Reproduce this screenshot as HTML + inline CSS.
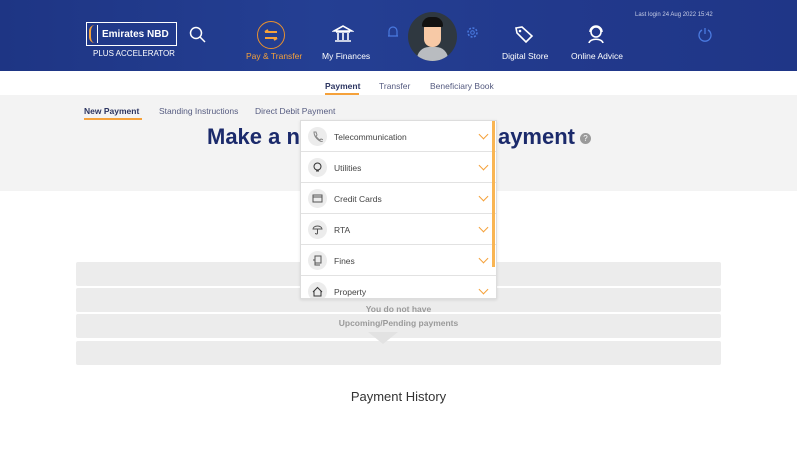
<!DOCTYPE html>
<html><head><meta charset="utf-8"><style>
*{margin:0;padding:0;box-sizing:border-box}
body{width:797px;height:459px;overflow:hidden;background:#fff;font-family:"Liberation Sans",sans-serif;position:relative}
.hdr{position:absolute;left:0;top:0;width:797px;height:71px;background:linear-gradient(90deg,#1e3584,#243f93 40%,#22398c 70%,#1f3687)}
.abs{position:absolute}
.w{color:#fff;font-size:8.5px}
.sub{position:absolute;top:71px;left:0;width:797px;height:24px;background:#fff}
.grey{position:absolute;top:95px;left:0;width:797px;height:96px;background:#f3f3f3}
.row{position:absolute;left:76px;width:645px;height:24px;background:#ececec;border-radius:2px}
.dd{position:absolute;left:300px;top:120px;width:197px;height:179px;background:#fff;border:1px solid #ddd;overflow:hidden;box-shadow:0 1px 3px rgba(0,0,0,.1)}
.it{height:31px;border-bottom:1px solid #e2e2e2;position:relative;font-size:8.5px;color:#444}
.it .ic{position:absolute;left:7px;top:6px;width:19px;height:19px;border-radius:50%;background:#ececec}
.it .ic svg{position:absolute;left:4px;top:4px}
.it span{position:absolute;left:33px;top:11px}
.it .ch{position:absolute;right:9px;top:10px;width:7px;height:7px;border-right:1.3px solid #f5a13a;border-bottom:1.3px solid #f5a13a;transform:rotate(45deg)}
</style></head><body>
<div class="hdr"></div>
<div class="abs" style="left:86px;top:22px;width:91px;height:24px;border:1.5px solid #fff"></div>
<div class="abs" style="left:89px;top:25px;width:10px;height:18px;border-left:2px solid #f5a13a;border-radius:6px 0 0 6px"></div>
<div class="abs" style="left:97px;top:25px;width:1px;height:18px;background:#fff"></div>
<div class="abs" style="left:102px;top:29px;color:#fff;font-size:10px;font-weight:bold">Emirates NBD</div>
<div class="abs w" style="left:93px;top:49px;font-size:8px">PLUS ACCELERATOR</div>
<svg class="abs" style="left:189px;top:26px" width="17" height="17"><circle cx="7" cy="7" r="5.5" stroke="#fff" stroke-width="1.5" fill="none"/><line x1="11" y1="11" x2="16" y2="16" stroke="#fff" stroke-width="1.5"/></svg>
<div class="abs" style="left:257px;top:21px;width:28px;height:28px;border:1px solid #e8902e;border-radius:50%"></div>
<svg class="abs" style="left:262px;top:28px" width="18" height="14"><path d="M3 4h12M3 4l3-2M15 10H3M15 10l-3 2" stroke="#f5a13a" stroke-width="2" fill="none"/></svg>
<div class="abs" style="left:246px;top:51px;color:#f5a13a;font-size:8.5px">Pay &amp; Transfer</div>
<div class="abs" style="left:267px;top:66px;width:0;height:0;border:5px solid transparent;border-bottom-color:#fff"></div>
<svg class="abs" style="left:332px;top:24px" width="22" height="20"><path d="M2 7L11 2L20 7ZM4 8h14M6 9v7M11 9v7M16 9v7M3 17h16" stroke="#fff" stroke-width="1.6" fill="none"/></svg>
<div class="abs w" style="left:322px;top:51px">My Finances</div>
<svg class="abs" style="left:387px;top:25px" width="12" height="14"><path d="M2 11V6a4 4 0 0 1 8 0v5zM1 11h10" stroke="#4a7ae0" stroke-width="1.2" fill="none"/></svg>
<div class="abs" style="left:408px;top:12px;width:49px;height:49px;border-radius:50%;background:#2f3840;overflow:hidden">
<div class="abs" style="left:9px;top:35px;width:31px;height:20px;border-radius:12px 12px 0 0;background:#b9bcc0"></div>
<div class="abs" style="left:16px;top:8px;width:17px;height:27px;border-radius:8px;background:#f7c9a6"></div>
<div class="abs" style="left:14px;top:5px;width:21px;height:10px;border-radius:10px 10px 2px 2px;background:#111"></div></div>
<svg class="abs" style="left:466px;top:26px" width="13" height="13"><circle cx="6.5" cy="6.5" r="4.5" stroke="#4a7ae0" stroke-width="1.5" stroke-dasharray="2 1.5" fill="none"/><circle cx="6.5" cy="6.5" r="1.8" stroke="#4a7ae0" fill="none"/></svg>
<svg class="abs" style="left:514px;top:25px" width="20" height="18"><path d="M2 3l6-1 10 9-6 6-9-9z" stroke="#fff" stroke-width="1.6" fill="none"/><circle cx="6" cy="6" r="1.3" fill="#fff"/></svg>
<div class="abs w" style="left:502px;top:51px">Digital Store</div>
<svg class="abs" style="left:587px;top:24px" width="18" height="20"><circle cx="9" cy="8" r="5" stroke="#fff" stroke-width="1.6" fill="none"/><path d="M3 8a6 6 0 0 1 12 0M2 19c1-5 13-5 14 0" stroke="#fff" stroke-width="1.6" fill="none"/></svg>
<div class="abs w" style="left:571px;top:51px">Online Advice</div>
<div class="abs" style="left:635px;top:12px;color:#c6cde6;font-size:6px">Last login 24 Aug 2022 15:42</div>
<svg class="abs" style="left:697px;top:26px" width="16" height="17"><path d="M5 4a6 6 0 1 0 6 0M8 2v6" stroke="#4a7ae0" stroke-width="1.3" fill="none"/></svg>
<div class="sub"></div>
<div class="abs" style="left:325px;top:81px;font-size:8.5px;font-weight:bold;color:#2c3561">Payment</div>
<div class="abs" style="left:325px;top:93px;width:34px;height:2px;background:#f5a13a"></div>
<div class="abs" style="left:379px;top:81px;font-size:8.5px;color:#555b80">Transfer</div>
<div class="abs" style="left:430px;top:81px;font-size:8.5px;color:#555b80">Beneficiary Book</div>
<div class="grey"></div>
<div class="abs" style="left:84px;top:106px;font-size:8.5px;font-weight:bold;color:#2c3561">New Payment</div>
<div class="abs" style="left:84px;top:118px;width:58px;height:2px;background:#f5a13a"></div>
<div class="abs" style="left:159px;top:106px;font-size:8.5px;color:#555b80">Standing Instructions</div>
<div class="abs" style="left:255px;top:106px;font-size:8.5px;color:#555b80">Direct Debit Payment</div>
<div class="abs" style="left:207px;top:124px;font-size:22px;font-weight:bold;color:#1b2a6b">Make a new</div>
<div class="abs" style="right:222px;top:124px;font-size:22px;font-weight:bold;color:#1b2a6b">ayment</div>
<div class="abs" style="left:580px;top:133px;width:11px;height:11px;border-radius:50%;background:#9a9a9a;color:#fff;font-size:8px;text-align:center;line-height:11px">?</div>
<div class="row" style="top:262px"></div>
<div class="row" style="top:288px"></div>
<div class="row" style="top:314px"></div>
<div class="row" style="top:341px"></div>
<div class="abs" style="left:368px;top:332px;width:0;height:0;border:15px solid transparent;border-top:12px solid #e2e2e2"></div>
<div class="abs" style="left:300px;top:302px;width:197px;text-align:center;font-size:8.5px;font-weight:bold;color:#9a9a9a;line-height:14px">You do not have<br>Upcoming/Pending payments</div>
<div class="abs" style="left:0;top:389px;width:797px;text-align:center;font-size:13px;color:#333">Payment History</div>
<div class="dd">
<div class="it"><div class="ic"><svg width="11" height="11"><path d="M2 1l2 0 1 3-1 1c1 2 2 3 4 4l1-1 3 1 0 2c-5 0-10-5-10-10z" stroke="#888" fill="none"/></svg></div><span>Telecommunication</span><div class="ch"></div></div>
<div class="it"><div class="ic"><svg width="11" height="11"><circle cx="5.5" cy="4.5" r="3.5" stroke="#333" fill="none"/><path d="M4 9h3" stroke="#333"/></svg></div><span>Utilities</span><div class="ch"></div></div>
<div class="it"><div class="ic"><svg width="11" height="11"><rect x="1" y="2" width="9" height="7" stroke="#555" fill="none"/><path d="M1 4h9" stroke="#555"/></svg></div><span>Credit Cards</span><div class="ch"></div></div>
<div class="it"><div class="ic"><svg width="11" height="11"><path d="M1 5a4.5 3 0 0 1 9 0zM5.5 5v4a1 1 0 0 1-2 0" stroke="#555" fill="none"/></svg></div><span>RTA</span><div class="ch"></div></div>
<div class="it"><div class="ic"><svg width="11" height="11"><path d="M3 1h6v7H3zM1 5h2v5h5" stroke="#555" fill="none"/></svg></div><span>Fines</span><div class="ch"></div></div>
<div class="it"><div class="ic"><svg width="11" height="11"><path d="M1 6l4.5-4.5L10 6M2 5v5h7V5" stroke="#333" fill="none"/></svg></div><span>Property</span><div class="ch"></div></div>
<div class="abs" style="left:191px;top:0;width:3px;height:146px;background:#f9b553"></div>
</div>
</body></html>
